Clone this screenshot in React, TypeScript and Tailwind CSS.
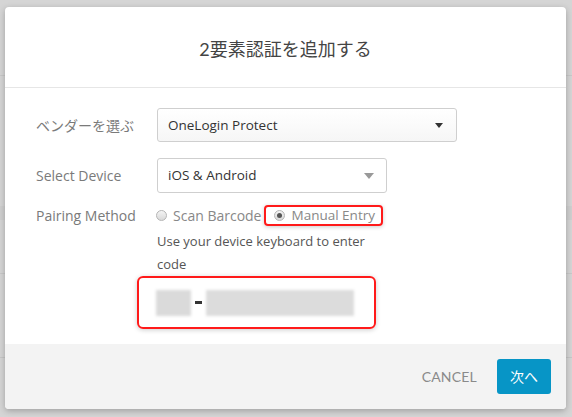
import React from 'react';

const font = { fontFamily: '"Open Sans", "Noto Sans CJK JP", sans-serif' };
const lato = { fontFamily: 'Lato, "Noto Sans CJK JP", sans-serif' };

const Caret = ({ color, w }: { color: string; w: number }) => (
  <svg width={w} height={w / 2 + 1} viewBox={`0 0 ${w} ${w / 2 + 1}`}>
    <path d={`M0 0 L${w} 0 L${w / 2} ${w / 2 + 1} Z`} fill={color} />
  </svg>
);

const Radio = ({ checked }: { checked?: boolean }) => (
  <span className="flex h-[11px] w-[11px] items-center justify-center rounded-full border border-[#b5b5b5] bg-gradient-to-b from-[#f4f4f4] to-[#d9d9d9]">
    {checked && <span className="h-[5px] w-[5px] rounded-full bg-[#555]" />}
  </span>
);

const Field = ({ label, children }: { label: string; children: React.ReactNode }) => (
  <div className="flex items-center">
    <div className="w-[121px] text-[14px] text-[#7a7a7a]">{label}</div>
    {children}
  </div>
);

export default function App() {
  return (
    <div style={font} className="relative h-[417px] w-[572px] overflow-hidden bg-[#d5d5d5] pl-[5px] pt-[7px]">
      {/* faint page underneath the overlay */}
      <div className="pointer-events-none absolute inset-0">
        <div className="absolute left-0 right-0 top-[75px] h-px bg-[#c8c8c8]" />
        <div className="absolute left-0 right-0 top-[206px] h-[14px] bg-[#cfcfcf]" />
        <div className="absolute left-0 right-0 top-[273px] h-px bg-[#c8c8c8]" />
        <div className="absolute left-0 right-0 top-[357px] h-px bg-[#c6c6c6]" />
      </div>

      <div className="relative flex h-[402px] w-[561px] flex-col overflow-hidden rounded-[4px] bg-white shadow-[0_2px_6px_rgba(0,0,0,0.25)]">
        <div style={lato} className="flex h-[81px] items-center justify-center border-b border-[#e6e6e6] pt-[5px] text-[18px] text-[#444]">
          2要素認証を追加する
        </div>

        <div className="flex-1 pl-[31px] pt-[20px]">
          <Field label="ベンダーを選ぶ">
            <div className="flex h-[34px] w-[300px] items-center justify-between rounded-[3px] border border-[#cfcfcf] bg-gradient-to-b from-white to-[#f6f6f6] pl-[10px] pr-[13px] text-[13.5px] text-[#333]">
              <span>OneLogin Protect</span>
              <Caret color="#333" w={8} />
            </div>
          </Field>

          <div className="mt-[16px]">
            <Field label="Select Device">
              <div className="flex h-[35px] w-[230px] items-center justify-between rounded-[3px] border border-[#cfcfcf] bg-white pl-[10px] pr-[12px] text-[13.5px] text-[#333]">
                <span>iOS &amp; Android</span>
                <Caret color="#999" w={10} />
              </div>
            </Field>
          </div>

          <div className="mt-[12px] flex h-[21px] items-center">
            <div className="w-[121px] text-[14px] text-[#7a7a7a]">Pairing Method</div>
            <div className="flex items-center">
              <span className="ml-[-1px]">
                <Radio />
              </span>
              <span className="ml-[6px] text-[14px] text-[#888]">Scan Barcode</span>
              <div className="ml-[3px] flex h-[21px] items-center rounded-[4px] border-2 border-[#ff1a1a] pl-[8px] pr-[6px] shadow-[0_1px_4px_rgba(0,0,0,0.2)]">
                <Radio checked />
                <span className="ml-[6px] text-[13.5px] text-[#888]">Manual Entry</span>
              </div>
            </div>
          </div>

          <div className="ml-[121px] mt-[4px] w-[230px] text-[13px] leading-[23px] text-[#555]">
            Use your device keyboard to enter code
          </div>

          <div className="ml-[101px] flex h-[53px] w-[239px] items-center rounded-[6px] border-2 border-[#ff1a1a] pl-[17px] shadow-[0_1px_5px_rgba(0,0,0,0.2)]">
            <div className="h-[26px] w-[35px] bg-[#dadada] blur-[1.5px]" />
            <div className="mx-[4px] h-[3px] w-[7px] bg-[#333]" />
            <div className="h-[26px] w-[148px] bg-[#dcdcdc] blur-[1.5px]" />
          </div>
        </div>

        <div style={lato} className="flex h-[65px] items-center justify-end gap-[20px] bg-[#f3f3f3] pr-[15px]">
          <span className="text-[14px] tracking-[0.2px] text-[#8a8a8a]">CANCEL</span>
          <div className="flex h-[35px] w-[54px] items-center justify-center rounded-[3px] bg-[#0795c6] text-[14px] text-white">
            次へ
          </div>
        </div>
      </div>
    </div>
  );
}
